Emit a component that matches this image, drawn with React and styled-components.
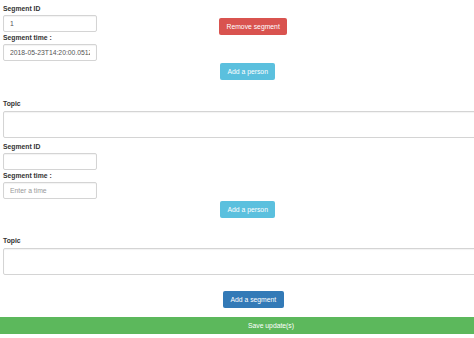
import React from 'react';
import styled, { createGlobalStyle } from 'styled-components';

const GlobalStyle = createGlobalStyle`
    html, body {
        margin: 0;
        padding: 0;
        background: #fff;
        overflow: hidden;
    }
    body {
        font-family: "Liberation Sans", Arial, Helvetica, sans-serif;
        color: #333;
    }
`;

const segments = [
    { id: '1', time: '2018-05-23T14:20:00.051Z', removable: true },
    { id: '', time: '', removable: false },
];

const App = () => (
    <Page>
        <GlobalStyle />
        {segments.map((seg, i) => (
            <Segment key={i} first={i === 0}>
                <SegmentTop>
                    <Fields>
                        <Label>{"Segment ID"}</Label>
                        <Input defaultValue={seg.id} />
                        <Label gap>{"Segment time :"}</Label>
                        <Input defaultValue={seg.time} placeholder={"Enter a time"} />
                    </Fields>
                    {seg.removable && (
                        <Actions>
                            <Button variant={"danger"}>{"Remove segment"}</Button>
                        </Actions>
                    )}
                </SegmentTop>
                <ButtonRow offset={217}>
                    <Button variant={"info"}>{"Add a person"}</Button>
                </ButtonRow>
                <TopicLabel>{"Topic"}</TopicLabel>
                <TopicInput />
            </Segment>
        ))}
        <ButtonRow offset={223} top={16}>
            <Button variant={"primary"}>{"Add a segment"}</Button>
        </ButtonRow>
        <SaveBar>{"Save update(s)"}</SaveBar>
    </Page>
);

export default App;

const colors = {
    danger: '#d9534f',
    info: '#5bc0de',
    primary: '#337ab7',
    success: '#5cb85c',
};

const Page = styled.div`
    width: 542px;
    padding-top: 4px;
`;
const Segment = styled.div`
    padding: 0 3px;
    margin-top: ${p => (p.first ? 0 : 4)}px;
`;
const SegmentTop = styled.div`
    display: flex;
    align-items: flex-start;
`;
const Fields = styled.div`
    width: 94px;
    display: flex;
    flex-direction: column;
`;
const Actions = styled.div`
    margin-left: 122px;
    padding-top: 11px;
`;
const Label = styled.label`
    display: block;
    font-size: 6.8px;
    line-height: 10px;
    font-weight: bold;
    color: #333;
    margin-top: ${p => (p.gap ? 1 : 0)}px;
    margin-bottom: 1px;
`;
const Input = styled.input`
    box-sizing: border-box;
    width: 100%;
    height: 17px;
    margin: 0;
    padding: 0 6px;
    border: 1px solid #d4d4d4;
    border-radius: 2px;
    box-shadow: inset 0 1px 1px rgba(0, 0, 0, 0.05);
    font-family: "Liberation Sans", Arial, sans-serif;
    font-size: 6.8px;
    color: #555;
    outline: none;
    &::placeholder {
        color: #999;
    }
`;
const TopicLabel = styled(Label)`
    margin-top: 18.5px;
    margin-bottom: 2px;
`;
const TopicInput = styled(Input)`
    width: 536px;
    height: 27px;
`;
const ButtonRow = styled.div`
    display: flex;
    padding-left: ${p => p.offset}px;
    margin-top: ${p => (p.top !== undefined ? p.top : 2)}px;
`;
const Button = styled.button`
    box-sizing: border-box;
    height: 17px;
    padding: 0 6.5px;
    border: 1px solid transparent;
    border-radius: 2px;
    background: ${p => colors[p.variant]};
    color: #fff;
    font-family: "Liberation Sans", Arial, sans-serif;
    font-size: 6.8px;
    line-height: 15px;
    cursor: pointer;
`;
const SaveBar = styled.div`
    margin-top: 9px;
    height: 17px;
    background: ${colors.success};
    color: #fff;
    font-size: 6.8px;
    line-height: 17px;
    text-align: center;
`;
